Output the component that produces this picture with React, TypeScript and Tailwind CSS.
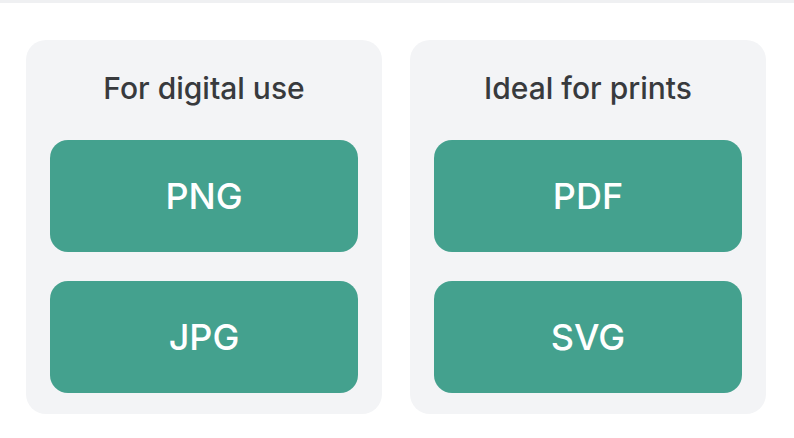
const groups = [
  { title: "For digital use", formats: ["PNG", "JPG"] },
  { title: "Ideal for prints", formats: ["PDF", "SVG"] },
];

export default function App() {
  return (
    <div className="w-[794px] h-[438px] bg-white font-['Inter',sans-serif] overflow-hidden">
      <div className="h-[3px] bg-[#eff0f2]" />
      <div className="grid grid-cols-2 gap-[28px] pl-[26px] pr-[28px] pt-[37px]">
        {groups.map((g) => (
          <section
            key={g.title}
            className="rounded-[20px] bg-[#f3f4f6] px-[24px] pt-[30px] pb-[21px] flex flex-col"
          >
            <h2 className="text-center text-[30px] leading-[36px] font-medium text-[#383a3d]">
              {g.title}
            </h2>
            <div className="mt-[34px] flex flex-col gap-[29px]">
              {g.formats.map((f) => (
                <button
                  key={f}
                  className="h-[112px] rounded-[18px] bg-[#44a18e] text-white text-[36px] font-medium"
                >
                  {f}
                </button>
              ))}
            </div>
          </section>
        ))}
      </div>
    </div>
  );
}
